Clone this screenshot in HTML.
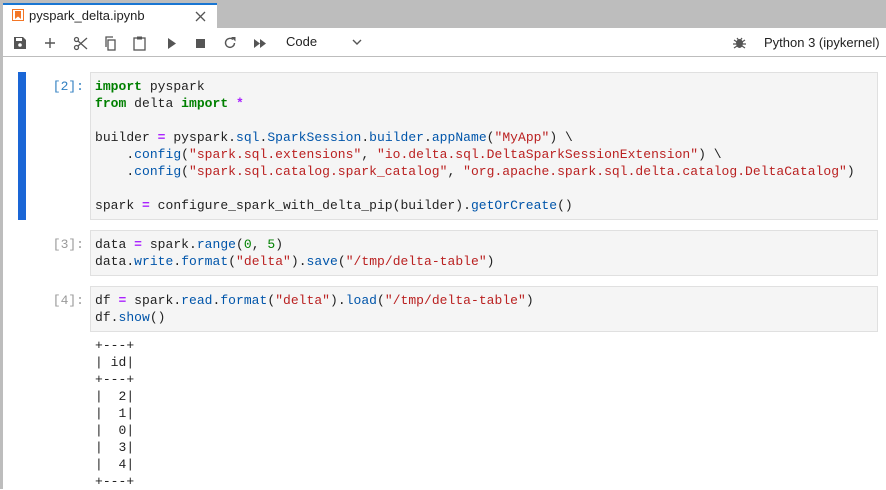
<!DOCTYPE html>
<html><head><meta charset="utf-8"><style>
*{margin:0;padding:0;box-sizing:border-box}
body{width:886px;height:489px;overflow:hidden;background:#fff;font-family:"Liberation Sans",sans-serif;position:relative}
#strip{position:absolute;left:0;top:0;width:3px;height:489px;background:#bdbdbd}
#tabbar{position:absolute;left:0;top:0;width:886px;height:28px;background:#bdbdbd}
#tab{position:absolute;left:3px;top:3px;width:214px;height:25px;background:#fff;border-top:2px solid #1976d2;font-size:13px;color:#222}
#tab span{position:absolute;left:26px;top:3px}
#tb{position:absolute;left:3px;top:28px;width:883px;height:29px;background:#fff;border-bottom:1px solid #bdbdbd}
.ic{position:absolute;top:8px}
.code{font-family:"Liberation Mono",monospace;font-size:13px;line-height:17px;white-space:pre;color:#222;letter-spacing:0.03px}
.box{position:absolute;left:90px;width:788px;background:#f5f5f5;border:1px solid #e0e0e0;padding:5px 4px}
.pr{position:absolute;font-family:"Liberation Mono",monospace;font-size:13px;color:#999;width:84px;text-align:right}
.k{color:#008000;font-weight:bold}.o{color:#aa22ff;font-weight:bold}.s{color:#ba2121}.n{color:#008000}.f{color:#0055aa}
</style></head><body>
<div id="tabbar"></div>
<div id="strip"></div>
<div id="tab"><svg style="position:absolute;left:9px;top:4px" width="12" height="12"><rect x="0.5" y="0.5" width="11" height="11" fill="#fff" stroke="#f37626"/><path d="M3 2h6v8l-3-2.5-3 2.5z" fill="#f37626"/></svg><span>pyspark_delta.ipynb</span><svg style="position:absolute;left:192px;top:6px" width="11" height="11"><path d="M1 1L10 10M10 1L1 10" stroke="#555" stroke-width="1.3"/></svg></div>
<div id="tb">
<svg class="ic" style="left:10px" width="14" height="14"><path d="M1 1h9l3 3v9H1z" fill="#555"/><rect x="3" y="2" width="6" height="3" fill="#fff"/><circle cx="7" cy="9" r="1.8" fill="#fff"/></svg>
<svg class="ic" style="left:40px" width="14" height="14"><path d="M7 2v10M2 7h10" stroke="#555" stroke-width="1.4"/></svg>
<svg class="ic" style="left:70px" width="15" height="15"><circle cx="3.5" cy="3.5" r="2" fill="none" stroke="#555" stroke-width="1.3"/><circle cx="3.5" cy="11.5" r="2" fill="none" stroke="#555" stroke-width="1.3"/><path d="M5 5l9 8M5 10l9-8" stroke="#555" stroke-width="1.3"/></svg>
<svg class="ic" style="left:100px" width="14" height="15"><path d="M3 11V1h7" fill="none" stroke="#555" stroke-width="1.3"/><rect x="5" y="4" width="7" height="10" fill="none" stroke="#555" stroke-width="1.3"/></svg>
<svg class="ic" style="left:130px" width="14" height="15"><rect x="1" y="2" width="11" height="12" fill="none" stroke="#555" stroke-width="1.3"/><rect x="4" y="0.5" width="5" height="3" fill="#555"/></svg>
<svg class="ic" style="left:164px;top:10px" width="10" height="11"><path d="M1 0l8 5.5L1 11z" fill="#555"/></svg>
<svg class="ic" style="left:193px;top:11px" width="10" height="10"><rect width="9" height="9" fill="#555"/></svg>
<svg class="ic" style="left:220px" width="14" height="14"><path d="M11.5 7A4.5 4.5 0 1 1 10 3.5" fill="none" stroke="#555" stroke-width="1.4"/><path d="M8 1h4.5v4.5z" fill="#555"/></svg>
<svg class="ic" style="left:251px;top:11px" width="13" height="10"><path d="M0 0l6 4.5L0 9zM6 0l6 4.5L6 9z" fill="#555"/></svg>
<div style="position:absolute;left:283px;top:6px;font-size:13px;color:#222">Code</div>
<svg class="ic" style="left:349px;top:11px" width="10" height="7"><path d="M1 1l4 4 4-4" fill="none" stroke="#555" stroke-width="1.4"/></svg>
<svg class="ic" style="left:730px;top:8px" width="13" height="13"><ellipse cx="6.5" cy="7.5" rx="3.5" ry="4.5" fill="#555"/><path d="M1 4l3 2M12 4l-3 2M0 8h3M10 8h3M1 12l3-2M12 12l-3-2M4 2l1.5 2M9 2L7.5 4" stroke="#555" stroke-width="1.2"/></svg>
<div style="position:absolute;left:761px;top:7px;font-size:13px;color:#222">Python 3 (ipykernel)</div>
</div>
<div style="position:absolute;left:18px;top:72px;width:8px;height:148px;background:#1a66d6"></div>
<div class="pr" style="left:0;top:79px;color:#307fc1">[2]:</div>
<div class="box code" style="top:72px;height:148px"><span class="k">import</span> pyspark
<span class="k">from</span> delta <span class="k">import</span> <span class="o">*</span>

builder <span class="o">=</span> pyspark.<span class="f">sql</span>.<span class="f">SparkSession</span>.<span class="f">builder</span>.<span class="f">appName</span>(<span class="s">"MyApp"</span>) \
    .<span class="f">config</span>(<span class="s">"spark.sql.extensions"</span>, <span class="s">"io.delta.sql.DeltaSparkSessionExtension"</span>) \
    .<span class="f">config</span>(<span class="s">"spark.sql.catalog.spark_catalog"</span>, <span class="s">"org.apache.spark.sql.delta.catalog.DeltaCatalog"</span>)

spark <span class="o">=</span> configure_spark_with_delta_pip(builder).<span class="f">getOrCreate</span>()</div>
<div class="pr" style="left:0;top:237px">[3]:</div>
<div class="box code" style="top:230px;height:46px">data <span class="o">=</span> spark.<span class="f">range</span>(<span class="n">0</span>, <span class="n">5</span>)
data.<span class="f">write</span>.<span class="f">format</span>(<span class="s">"delta"</span>).<span class="f">save</span>(<span class="s">"/tmp/delta-table"</span>)</div>
<div class="pr" style="left:0;top:293px">[4]:</div>
<div class="box code" style="top:286px;height:46px">df <span class="o">=</span> spark.<span class="f">read</span>.<span class="f">format</span>(<span class="s">"delta"</span>).<span class="f">load</span>(<span class="s">"/tmp/delta-table"</span>)
df.<span class="f">show</span>()</div>
<div class="code" style="position:absolute;left:95px;top:337px">+---+
| id|
+---+
|  2|
|  1|
|  0|
|  3|
|  4|
+---+</div>
</body></html>
